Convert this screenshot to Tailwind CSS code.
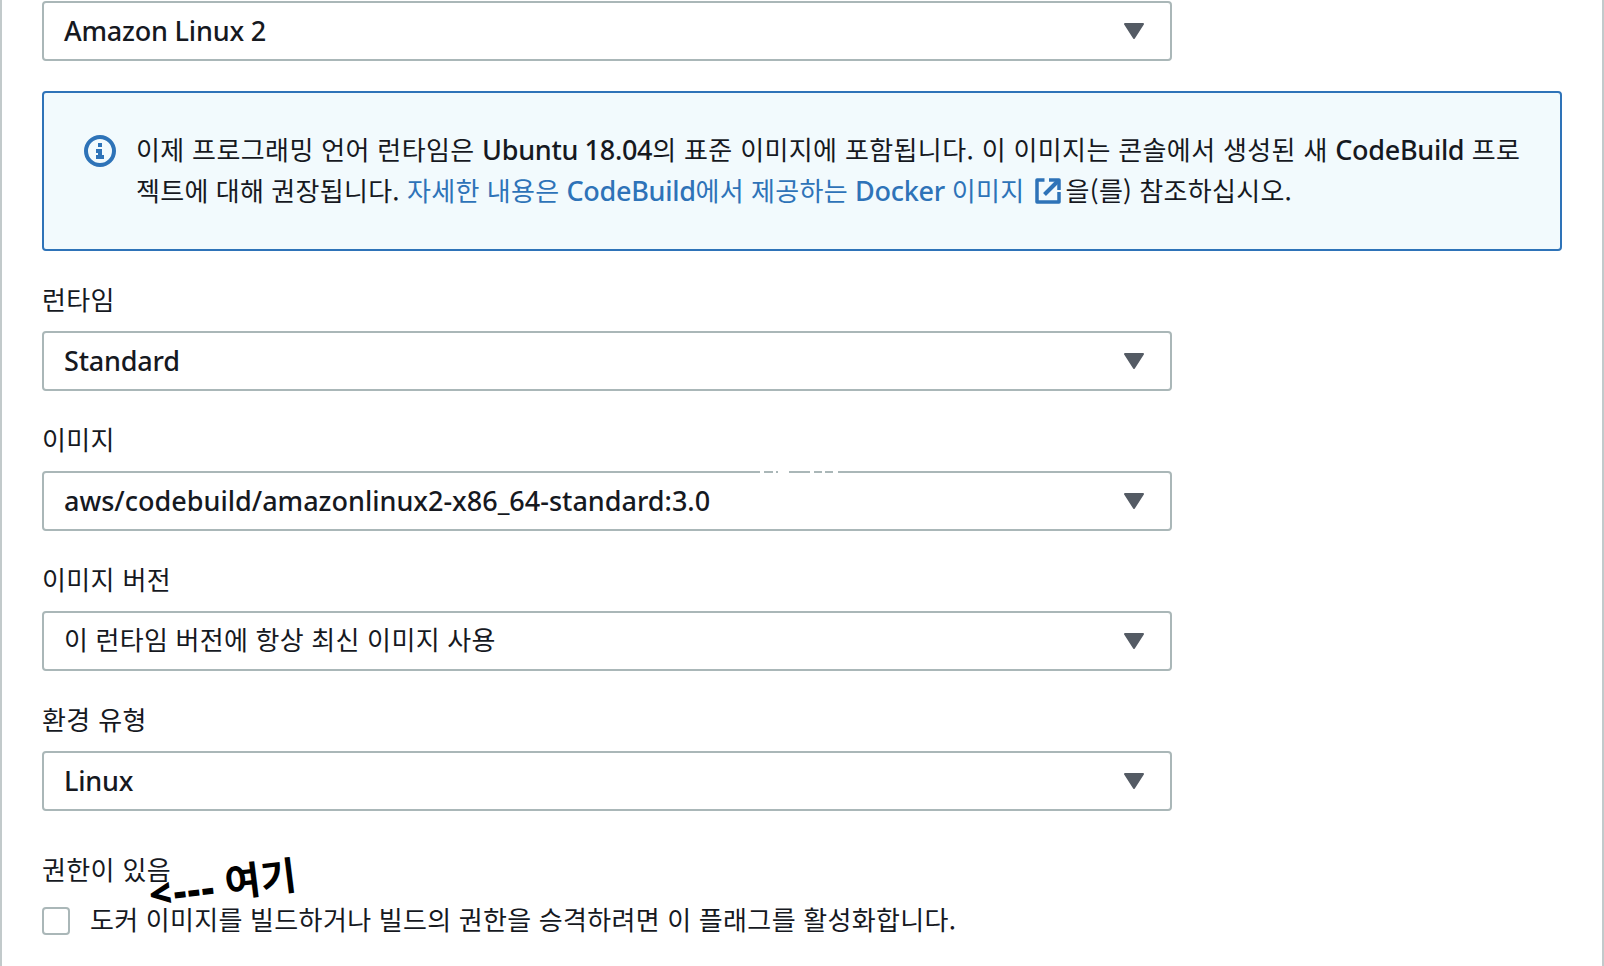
<!DOCTYPE html>
<html lang="ko">
<head>
    <meta charset="UTF-8">
    <meta name="viewport" content="width=device-width, initial-scale=1.0">
    <title>CodeBuild - 환경</title>
    <script src="https://cdn.jsdelivr.net/npm/@tailwindcss/browser@4"></script>
    <style>
        body {
            font-family: 'Noto Sans CJK KR', sans-serif;
        }
        .latin {
            font-family: 'Noto Sans', 'Open Sans', sans-serif;
            font-weight: 500;
        }
    </style>
</head>
<body class="bg-white text-[#16191f] text-[26px] leading-10 tracking-[0.35px] overflow-hidden">

    <!-- Form panel -->
    <main class="relative w-[1604px] h-[966px] overflow-hidden border-x-2 border-[#c2cacb] pl-10 pr-10 pt-px">

        <!-- Operating system -->
        <div class="w-[1130px] h-[60px] border-2 border-[#aab7b8] rounded-[4px] flex items-center justify-between pl-5 pr-[26px]">
            <span class="latin text-[27px] tracking-[-0.2px]">Amazon Linux 2</span>
            <svg class="w-5 h-4" viewBox="0 0 20 16" fill="#545b64" stroke="#545b64" stroke-width="2" stroke-linejoin="round"><path d="M1 1h18l-9 14z" /></svg>
        </div>

        <!-- Info alert -->
        <div class="mt-[30px] h-[160px] border-2 border-[#2e73b8] bg-[#f2fafd] rounded-[4px] flex pl-10 pt-9">
            <svg class="w-8 h-8 mt-1.5 shrink-0" viewBox="0 0 32 32" fill="#2e73b8">
                <circle cx="16" cy="16" r="14" fill="none" stroke="#2e73b8" stroke-width="4" />
                <path d="M14 8h4v4h-4zM12 14h6v6h2v4h-8v-4h2v-2h-2z" />
            </svg>
            <div class="ml-5 whitespace-nowrap">
                <p class="[word-spacing:-0.2px] tracking-[0.4px]">이제 프로그래밍 언어 런타임은 <span class="latin text-[27px] tracking-[-0.3px]">Ubuntu 18.04</span>의 표준 이미지에 포함됩니다. 이 이미지는 콘솔에서 생성된 새 <span class="latin text-[27px] tracking-[-0.3px]">CodeBuild</span> 프로</p>
                <p class="[word-spacing:-0.5px] tracking-[0.3px]">젝트에 대해 권장됩니다. <a class="text-[#2e73b8]">자세한 내용은 <span class="latin text-[27px] tracking-[-0.3px]">CodeBuild</span>에서 제공하는 <span class="latin text-[27px] tracking-[-0.3px]">Docker</span> 이미지 <svg class="inline-block w-[26px] h-[26px] ml-[3px] mr-[5px] -mt-1.5" viewBox="0 0 26 26" fill="none" stroke="#2e73b8" stroke-width="3.5" stroke-linejoin="round"><path d="M9.5 2H2v22h22V14M14 2h10v10" /><path d="M23.5 2.5L9.5 16.5" stroke-width="4" /></svg></a>을(를) 참조하십시오.</p>
            </div>
        </div>

        <!-- Runtime -->
        <div class="mt-[30px]">
            <label class="block h-10 leading-9">런타임</label>
            <div class="mt-[10px] w-[1130px] h-[60px] border-2 border-[#aab7b8] rounded-[4px] flex items-center justify-between pl-5 pr-[26px]">
                <span class="latin text-[27px] tracking-[-0.2px]">Standard</span>
                <svg class="w-5 h-4" viewBox="0 0 20 16" fill="#545b64" stroke="#545b64" stroke-width="2" stroke-linejoin="round"><path d="M1 1h18l-9 14z" /></svg>
            </div>
        </div>

        <!-- Image -->
        <div class="mt-[30px]">
            <label class="block h-10 leading-9">이미지</label>
            <div class="relative mt-[10px] w-[1130px] h-[60px] border-2 border-[#aab7b8] rounded-[4px] flex items-center justify-between pl-5 pr-[26px]">
                <span class="latin text-[27px] tracking-normal">aws/codebuild/amazonlinux2-x86_64-standard:3.0</span>
                <svg class="w-5 h-4" viewBox="0 0 20 16" fill="#545b64" stroke="#545b64" stroke-width="2" stroke-linejoin="round"><path d="M1 1h18l-9 14z" /></svg>
                <!-- White marks over the top border -->
                <svg class="absolute -top-[2px] left-[716px] w-[80px] h-[2px]" viewBox="0 0 80 2" fill="#ffffff"><path d="M0 0h4v2H0zM13 0h3v2h-3zM18 0h11v2H18zM50 0h4v2h-4zM62 0h3v2h-3zM73 0h5v2h-5z" /></svg>
            </div>
        </div>

        <!-- Image version -->
        <div class="mt-[30px]">
            <label class="block h-10 leading-9">이미지 버전</label>
            <div class="mt-[10px] w-[1130px] h-[60px] border-2 border-[#aab7b8] rounded-[4px] flex items-center justify-between pl-5 pr-[26px]">
                <span class="pb-1 [word-spacing:-0.4px]">이 런타임 버전에 항상 최신 이미지 사용</span>
                <svg class="w-5 h-4" viewBox="0 0 20 16" fill="#545b64" stroke="#545b64" stroke-width="2" stroke-linejoin="round"><path d="M1 1h18l-9 14z" /></svg>
            </div>
        </div>

        <!-- Environment type -->
        <div class="mt-[30px]">
            <label class="block h-10 leading-9">환경 유형</label>
            <div class="mt-[10px] w-[1130px] h-[60px] border-2 border-[#aab7b8] rounded-[4px] flex items-center justify-between pl-5 pr-[26px]">
                <span class="latin text-[27px] tracking-[-0.2px]">Linux</span>
                <svg class="w-5 h-4" viewBox="0 0 20 16" fill="#545b64" stroke="#545b64" stroke-width="2" stroke-linejoin="round"><path d="M1 1h18l-9 14z" /></svg>
            </div>
        </div>

        <!-- Privileged -->
        <div class="mt-10">
            <p class="h-10 leading-9">권한이 있음</p>
            <label class="mt-[10px] h-10 flex items-center">
                <span class="w-7 h-7 border-2 border-[#aab7b8] rounded-[4px]"></span>
                <span class="ml-5 pb-1 [word-spacing:-0.4px]">도커 이미지를 빌드하거나 빌드의 권한을 승격하려면 이 플래그를 활성화합니다.</span>
            </label>
        </div>

        <!-- Handwritten pointer to the checkbox -->
        <div class="absolute left-[146px] top-[853px] flex items-center whitespace-nowrap text-black text-[39px] leading-[48px] -rotate-[7deg]">
            <span class="pt-2 font-['Noto_Sans'] font-black tracking-[1.6px]">&lt;---</span><span class="ml-2.5 font-bold tracking-normal">여기</span>
        </div>
    </main>

</body>
</html>
